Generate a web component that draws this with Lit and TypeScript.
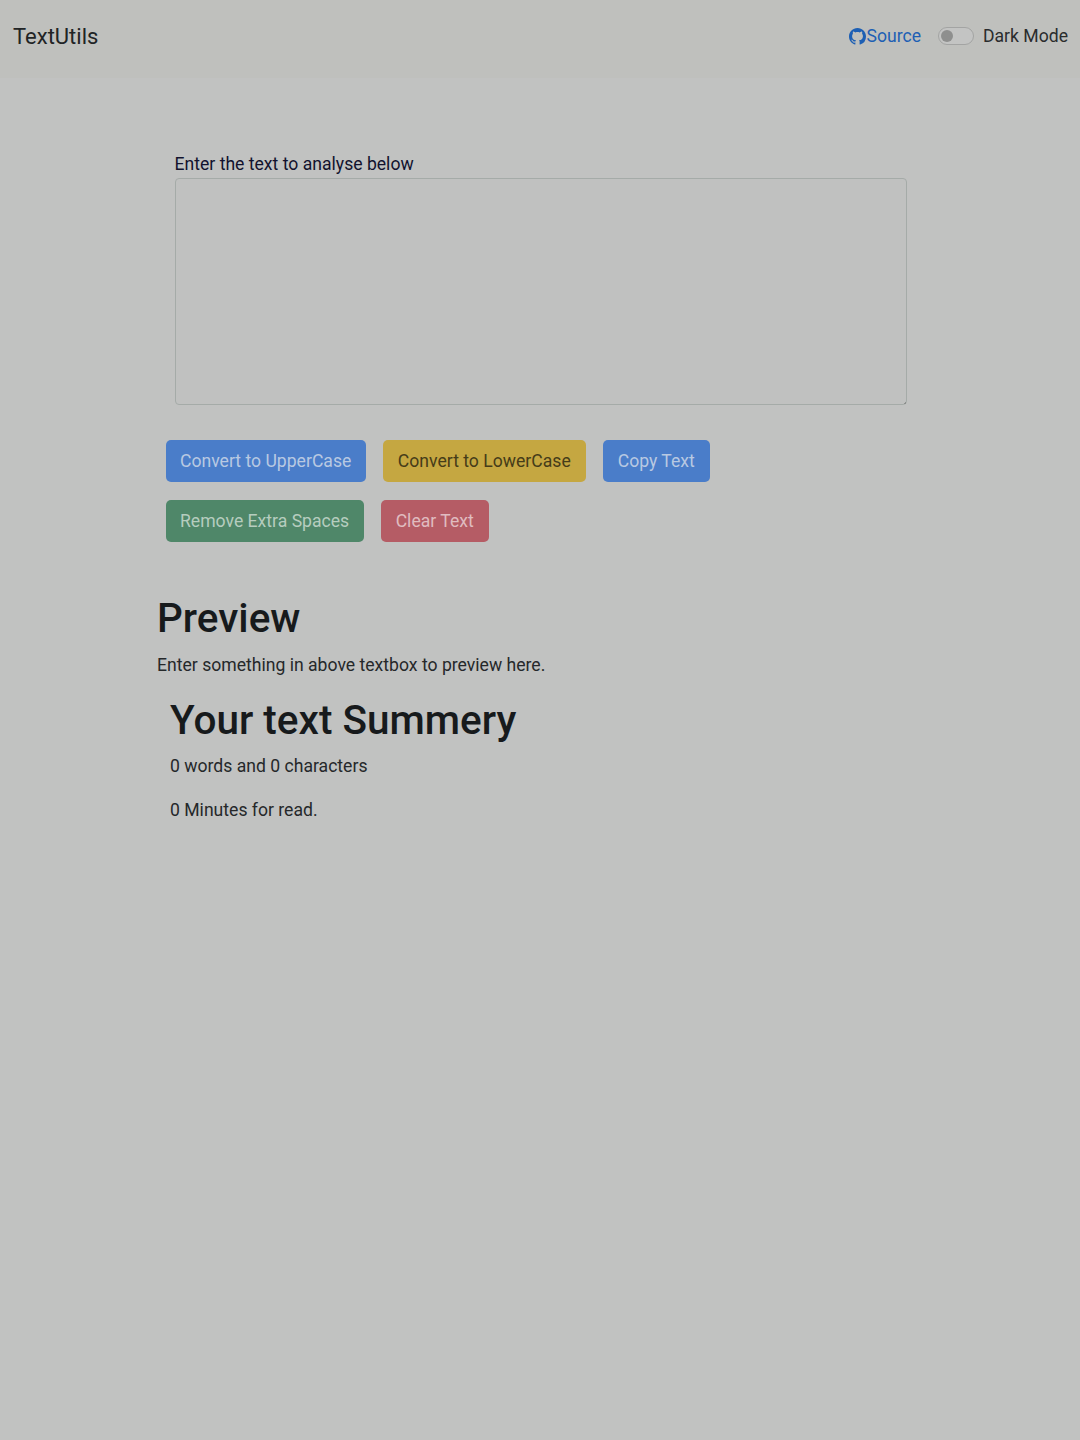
import { LitElement, html, css } from "lit";
import { customElement } from "lit/decorators.js";

@customElement("app-root")
export class AppRoot extends LitElement {
  static styles = css`
    :host {
      display: block;
      min-height: 1440px;
      background: #c1c2c1;
      font-family: Roboto, "Liberation Sans", sans-serif;
      font-size: 17.6px;
      color: #1b1e20;
    }
    * { box-sizing: border-box; }
    nav {
      height: 78px;
      background: #bfc0bd;
      display: flex;
      align-items: center;
      justify-content: space-between;
      padding: 0 12px 6px 13px;
    }
    .brand { font-size: 22px; color: #212425; }
    .right { display: flex; align-items: center; }
    .source { display: flex; align-items: center; color: #1d5fb4; margin-right: 17px; }
    .source svg { width: 17px; height: 17px; display: block; }
    .switch {
      width: 36px; height: 18px; border-radius: 9px;
      border: 1px solid #a3a4a3; background: #c3c4c3;
      padding: 2px; margin-right: 9px; display: flex; align-items: center;
    }
    .switch i { display: block; width: 12px; height: 12px; border-radius: 50%; background: #8e8f8e; }
    .mode { color: #2a2c2d; }
    main { width: 766px; margin: 0 auto; padding-top: 75px; }
    .form { padding: 0 16px 0 17.5px; }
    label { display: block; line-height: 22px; margin-bottom: 3px; color: #12122e; }
    .field { position: relative; width: 732.5px; height: 227px; }
    textarea {
      display: block; width: 100%; height: 100%;
      background: #c0c1c0; border: 1px solid #a5aba8; border-radius: 4px;
      margin: 0; outline: none; padding: 6px 12px; resize: none;
    }
    .grip {
      position: absolute; right: 1px; bottom: 1px; width: 3px; height: 3px;
      background: linear-gradient(135deg, transparent 50%, #8d908e 50%);
    }
    .buttons {
      display: flex; flex-wrap: wrap; gap: 17.5px 17px;
      padding: 35px 0 0 9px; width: 600px;
    }
    .btn {
      height: 42px; padding: 2px 14.5px 0 14px; border-radius: 5px;
      display: flex; align-items: center; line-height: 1;
      white-space: nowrap;
    }
    .wide { padding: 2px 15px 0; }
    .blue { background: #4a7dc9; color: #b8c9e2; }
    .yellow { background: #c5a741; color: #453c19; }
    .green { background: #4f8769; color: #b6cdbf; }
    .red { background: #b55c65; color: #e0bcc0; }
    h2 {
      margin: 0; font-weight: 500; font-size: 40.5px; line-height: 48px; color: #171a1c;
    }
    .preview { padding-top: 52.5px; }
    .preview p { margin: 10px 0 0; line-height: 27px; color: #25282a; }
    .summary { padding: 17px 0 0 13px; }
    .summary p { margin: 0 0 17px; line-height: 27px; color: #25282a; }
    .summary h2 { margin-bottom: 9px; }
  `;

  render() {
    return html`
      <nav>
        <div class="brand">TextUtils</div>
        <div class="right">
          <div class="source">
            <svg viewBox="0 0 16 16" fill="#1d5fb4"><path d="M8 0C3.58 0 0 3.58 0 8c0 3.54 2.29 6.53 5.47 7.59.4.07.55-.17.55-.38 0-.19-.01-.82-.01-1.49-2.01.37-2.53-.49-2.69-.94-.09-.23-.48-.94-.82-1.13-.28-.15-.68-.52-.01-.53.63-.01 1.08.58 1.23.82.72 1.21 1.87.87 2.33.66.07-.52.28-.87.51-1.07-1.78-.2-3.64-.89-3.64-3.95 0-.87.31-1.59.82-2.15-.08-.2-.36-1.02.08-2.12 0 0 .67-.21 2.2.82.64-.18 1.32-.27 2-.27.68 0 1.36.09 2 .27 1.53-1.04 2.2-.82 2.2-.82.44 1.1.16 1.92.08 2.12.51.56.82 1.27.82 2.15 0 3.07-1.87 3.75-3.65 3.95.29.25.54.73.54 1.48 0 1.07-.01 1.93-.01 2.2 0 .21.15.46.55.38A8.01 8.01 0 0 0 16 8c0-4.42-3.58-8-8-8z"/></svg>
            <span>Source</span>
          </div>
          <div class="switch"><i></i></div>
          <span class="mode">Dark Mode</span>
        </div>
      </nav>
      <main>
        <div class="form">
          <label>Enter the text to analyse below</label>
          <div class="field">
            <textarea></textarea>
            <span class="grip"></span>
          </div>
        </div>
        <div class="buttons">
          <div class="btn blue">Convert to UpperCase</div>
          <div class="btn wide yellow">Convert to LowerCase</div>
          <div class="btn wide blue">Copy Text</div>
          <div class="btn green">Remove Extra Spaces</div>
          <div class="btn wide red">Clear Text</div>
        </div>
        <div class="preview">
          <h2>Preview</h2>
          <p>Enter something in above textbox to preview here.</p>
        </div>
        <div class="summary">
          <h2>Your text Summery</h2>
          <p>0 words and 0 characters</p>
          <p>0 Minutes for read.</p>
        </div>
      </main>
    `;
  }
}
